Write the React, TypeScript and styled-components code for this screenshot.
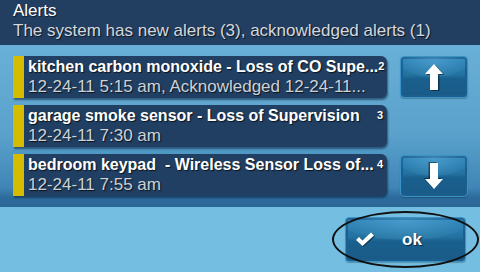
import React from 'react';
import styled, { createGlobalStyle } from 'styled-components';

const GlobalStyle = createGlobalStyle`
  html, body {
    margin: 0;
    padding: 0;
    width: 480px;
    height: 272px;
    overflow: hidden;
    font-family: 'Liberation Sans', Arial, sans-serif;
  }
`;

interface Alert {
  title: string;
  detail: string;
  index: number;
}

const alerts: Alert[] = [
  {
    title: 'kitchen carbon monoxide - Loss of CO Supe...',
    detail: '12-24-11 5:15 am, Acknowledged 12-24-11...',
    index: 2,
  },
  {
    title: 'garage smoke sensor - Loss of Supervision',
    detail: '12-24-11 7:30 am',
    index: 3,
  },
  {
    title: 'bedroom keypad  - Wireless Sensor Loss of...',
    detail: '12-24-11 7:55 am',
    index: 4,
  },
];

const Screen = styled.div`
  width: 480px;
  height: 272px;
  display: flex;
  flex-direction: column;
  background: #74bfe1;
`;

const Header = styled.div`
  height: 45px;
  box-sizing: border-box;
  padding: 1px 13px 0 13px;
  background: #223f62;
  display: flex;
  flex-direction: column;
`;

const HeaderTitle = styled.div`
  font-size: 17px;
  line-height: 20px;
  color: #ffffff;
  text-shadow: 1px 1px 1px rgba(0, 0, 0, 0.6);
`;

const HeaderSub = styled.div`
  font-size: 17px;
  line-height: 20px;
  color: #d4d8de;
  text-shadow: 1px 1px 1px rgba(0, 0, 0, 0.7);
`;

const Body = styled.div`
  height: 162px;
  box-sizing: border-box;
  padding: 11px 12px 10px 13px;
  display: flex;
  gap: 13px;
  background: linear-gradient(180deg, #68b0d7 0%, #5aa2cc 55%, #3f85b6 88%, #2c6c9c 94%, #2a6797 100%);
`;

const List = styled.div`
  width: 374px;
  display: flex;
  flex-direction: column;
  gap: 7px;
`;

const Row = styled.div`
  height: 42px;
  display: flex;
  background: #213f62;
  border-radius: 0 6px 6px 0;
  box-shadow: 1px 2px 2px rgba(10, 30, 60, 0.55);
  overflow: hidden;
`;

const Marker = styled.div`
  width: 11px;
  flex: none;
  background: #d6bc00;
`;

const RowContent = styled.div`
  flex: 1;
  padding: 1px 4px 0 4px;
  display: flex;
  flex-direction: column;
`;

const TitleLine = styled.div`
  display: flex;
  justify-content: space-between;
  align-items: flex-start;
`;

const RowTitle = styled.span`
  font-size: 16px;
  line-height: 20px;
  font-weight: bold;
  color: #ffffff;
  white-space: pre;
  text-shadow: 1px 1px 1px rgba(0, 0, 0, 0.7);
`;

const RowNumber = styled.span`
  font-size: 11px;
  line-height: 19px;
  font-weight: bold;
  color: #ffffff;
  text-shadow: 1px 1px 1px rgba(0, 0, 0, 0.7);
`;

const RowDetail = styled.div`
  font-size: 17px;
  line-height: 19px;
  color: #cdd2d8;
  white-space: pre;
  text-shadow: 1px 1px 1px rgba(0, 0, 0, 0.7);
`;

const Side = styled.div`
  width: 68px;
  display: flex;
  flex-direction: column;
  justify-content: space-between;
`;

const GlossButton = styled.button<{ $w: number; $h: number }>`
  width: ${p => p.$w}px;
  height: ${p => p.$h}px;
  box-sizing: border-box;
  border: 1px solid #3b92c6;
  border-radius: 4px;
  padding: 0;
  position: relative;
  overflow: hidden;
  display: flex;
  align-items: center;
  justify-content: center;
  background: linear-gradient(180deg, #2f86bc 0%, #22719f 45%, #195f8d 55%, #1a5b88 100%);
  box-shadow: inset 0 0 0 2px #1c5f8e, 0 1px 1px rgba(0, 0, 0, 0.25);
  cursor: pointer;

  &::before {
    content: '';
    position: absolute;
    left: -10%;
    right: -10%;
    top: -60%;
    height: 110%;
    border-radius: 50%;
    background: radial-gradient(ellipse at 50% 60%, rgba(120, 200, 240, 0.35), rgba(120, 200, 240, 0) 70%);
  }
`;

const Footer = styled.div`
  flex: 1;
  display: flex;
  justify-content: flex-end;
  align-items: flex-start;
  padding: 10px 14px 0 0;
`;

const OkWrap = styled.div`
  position: relative;
`;

const Ring = styled.div`
  position: absolute;
  left: -13px;
  top: -6px;
  width: 147px;
  height: 57px;
  border: 2px solid #111111;
  border-radius: 50%;
  box-sizing: border-box;
  pointer-events: none;
`;

const OkInner = styled.div`
  position: relative;
  width: 100%;
  display: flex;
  align-items: center;
  padding-left: 9px;
`;

const OkLabel = styled.span`
  font-size: 17px;
  font-weight: bold;
  color: #ffffff;
  margin-left: 27px;
  text-shadow: 1px 1px 1px rgba(0, 0, 0, 0.6);
  font-family: 'Liberation Sans', Arial, sans-serif;
`;

const Arrow = ({ down }: { down?: boolean }) => (
  <svg
    width="20"
    height="28"
    viewBox="0 0 20 28"
    style={{ position: 'relative', transform: down ? 'rotate(180deg)' : undefined }}
  >
    <path d="M10 1 L19 11 L14 11 L14 27 L6 27 L6 11 L1 11 Z" fill="rgba(0,0,0,0.45)" transform="translate(1.5 1)" />
    <path d="M10 1 L19 11 L14 11 L14 27 L6 27 L6 11 L1 11 Z" fill="#ffffff" />
  </svg>
);

const Check = () => (
  <svg width="20" height="15" viewBox="0 0 20 15" style={{ position: 'relative' }}>
    <path d="M1 8 L4 5 L7.5 8.5 L16 0.5 L19 3.5 L7.5 14 Z" fill="rgba(0,0,0,0.4)" transform="translate(1 1)" />
    <path d="M1 8 L4 5 L7.5 8.5 L16 0.5 L19 3.5 L7.5 14 Z" fill="#ffffff" />
  </svg>
);

export default function App() {
  return (
    <>
      <GlobalStyle />
      <Screen>
        <Header>
          <HeaderTitle>Alerts</HeaderTitle>
          <HeaderSub>The system has new alerts (3), acknowledged alerts (1)</HeaderSub>
        </Header>
        <Body>
          <List>
            {alerts.map(a => (
              <Row key={a.index}>
                <Marker />
                <RowContent>
                  <TitleLine>
                    <RowTitle>{a.title}</RowTitle>
                    <RowNumber>{a.index}</RowNumber>
                  </TitleLine>
                  <RowDetail>{a.detail}</RowDetail>
                </RowContent>
              </Row>
            ))}
          </List>
          <Side>
            <GlossButton $w={68} $h={42} aria-label="up">
              <Arrow />
            </GlossButton>
            <GlossButton $w={68} $h={42} aria-label="down">
              <Arrow down />
            </GlossButton>
          </Side>
        </Body>
        <Footer>
          <OkWrap>
            <GlossButton $w={121} $h={45}>
              <OkInner>
                <Check />
                <OkLabel>ok</OkLabel>
              </OkInner>
            </GlossButton>
            <Ring />
          </OkWrap>
        </Footer>
      </Screen>
    </>
  );
}
